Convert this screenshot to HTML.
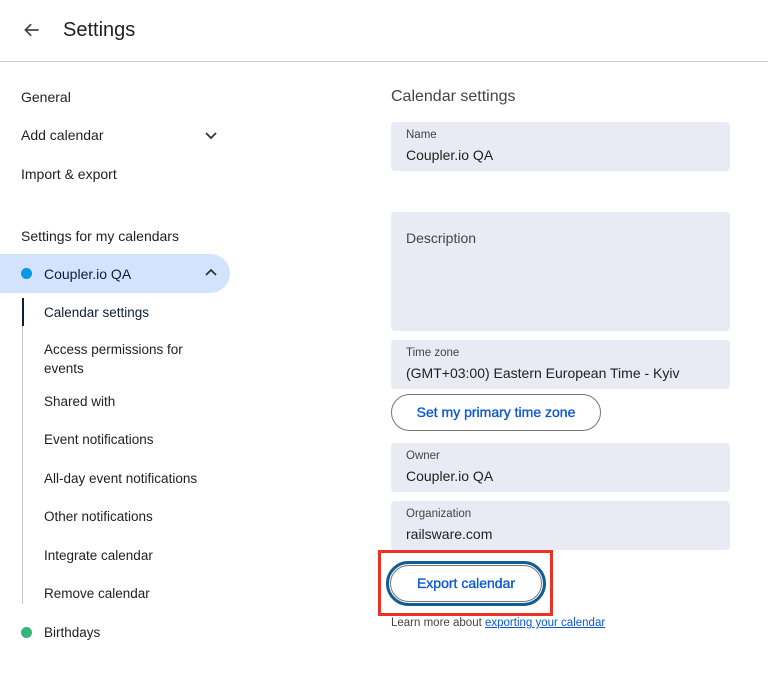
<!DOCTYPE html>
<html><head><style>
*{margin:0;padding:0;box-sizing:border-box}
body{width:768px;height:680px;background:#fff;font-family:"Liberation Sans",sans-serif;color:#1f1f1f;position:relative;overflow:hidden}
.a{position:absolute;white-space:nowrap}
.nav{font-size:14px;color:#1f1f1f}
.sub{font-size:13.5px;color:#1f1f1f}
.f{position:absolute;left:391px;width:339px;background:#e8ebf3;border-radius:4px}
.f .l{position:absolute;left:15px;font-size:11.5px;color:#444}
.f .v{position:absolute;left:15px;font-size:14px;color:#1f1f1f}
.btn{color:#0b57d0;font-size:14px;font-weight:normal;-webkit-text-stroke:0.35px #0b57d0;text-align:center;line-height:35px}
</style></head><body>
<svg class="a" style="left:22px;top:20px" width="20" height="20" viewBox="0 0 24 24"><path d="M20 12H5M11 5l-7 7 7 7" fill="none" stroke="#444" stroke-width="2"/></svg>
<div class="a" style="left:63px;top:19px;font-size:20px;color:#1f1f1f">Settings</div>
<div class="a" style="left:0;top:61px;width:768px;height:1px;background:#ccc"></div>

<div class="a nav" style="left:21px;top:89px">General</div>
<div class="a nav" style="left:21px;top:127px">Add calendar</div>
<svg class="a" style="left:204px;top:128px" width="14" height="14" viewBox="0 0 14 14"><path d="M2 5l5 5 5-5" fill="none" stroke="#333" stroke-width="1.8"/></svg>
<div class="a nav" style="left:21px;top:166px">Import &amp; export</div>
<div class="a nav" style="left:21px;top:228px">Settings for my calendars</div>
<div class="a" style="left:0;top:254px;width:230px;height:39px;background:#d3e3fd;border-radius:0 20px 20px 0"></div>
<div class="a" style="left:21px;top:268px;width:11px;height:11px;border-radius:50%;background:#039be5"></div>
<div class="a nav" style="left:44px;top:266px;color:#0b1d3a">Coupler.io QA</div>
<svg class="a" style="left:204px;top:266px" width="14" height="14" viewBox="0 0 14 14"><path d="M2 9l5-5 5 5" fill="none" stroke="#333" stroke-width="1.8"/></svg>
<div class="a" style="left:22px;top:298px;width:2px;height:28px;background:#0b1d3a"></div>
<div class="a" style="left:22px;top:326px;width:1px;height:278px;background:#c4c7c5"></div>
<div class="a sub" style="left:44px;top:305px;color:#0b1d3a">Calendar settings</div>
<div class="a sub" style="left:44px;top:340px;line-height:19px">Access permissions for<br>events</div>
<div class="a sub" style="left:44px;top:394px">Shared with</div>
<div class="a sub" style="left:44px;top:432px">Event notifications</div>
<div class="a sub" style="left:44px;top:471px">All-day event notifications</div>
<div class="a sub" style="left:44px;top:509px">Other notifications</div>
<div class="a sub" style="left:44px;top:548px">Integrate calendar</div>
<div class="a sub" style="left:44px;top:586px">Remove calendar</div>
<div class="a" style="left:21px;top:627px;width:11px;height:11px;border-radius:50%;background:#33b679"></div>
<div class="a sub" style="left:44px;top:625px">Birthdays</div>

<div class="a" style="left:391px;top:88px;font-size:16px;color:#444">Calendar settings</div>
<div class="f" style="top:122px;height:49px"><div class="l" style="top:7px">Name</div><div class="v" style="top:25px">Coupler.io QA</div></div>
<div class="f" style="top:212px;height:119px"><div class="v" style="top:18px;color:#444">Description</div></div>
<div class="f" style="top:340px;height:49px"><div class="l" style="top:7px">Time zone</div><div class="v" style="top:25px">(GMT+03:00) Eastern European Time - Kyiv</div></div>
<div class="a btn" style="left:391px;top:394px;width:210px;height:37px;border:1px solid #747775;border-radius:19px">Set my primary time zone</div>
<div class="f" style="top:443px;height:49px"><div class="l" style="top:7px">Owner</div><div class="v" style="top:25px">Coupler.io QA</div></div>
<div class="f" style="top:501px;height:49px"><div class="l" style="top:7px">Organization</div><div class="v" style="top:25px">railsware.com</div></div>
<div class="a" style="left:378px;top:550px;width:175px;height:66px;border:3px solid #ea3323"></div>
<div class="a" style="left:386px;top:561px;width:160px;height:45px;border:3px solid #0f5d94;border-radius:23px"></div>
<div class="a btn" style="left:390px;top:565px;width:152px;height:37px;border:1px solid #747775;border-radius:19px">Export calendar</div>
<div class="a" style="left:391px;top:617px;font-size:11.5px;color:#444">Learn more about <span style="color:#0b57d0;text-decoration:underline">exporting your calendar</span></div>
</body></html>
